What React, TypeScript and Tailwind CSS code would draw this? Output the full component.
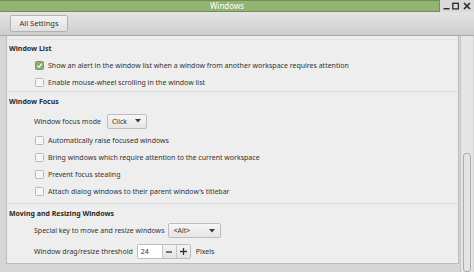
import React from "react";

function Check({ checked }: { checked?: boolean }) {
  return checked ? (
    <div className="w-[9px] h-[9px] rounded-[1.5px] bg-[#8cae69] border border-[#7a9c58] flex items-center justify-center shrink-0">
      <svg width="7" height="7" viewBox="0 0 7 7">
        <path d="M1.2 3.6 L2.9 5.2 L5.9 1.6" stroke="#ffffff" strokeWidth="1.2" fill="none" />
      </svg>
    </div>
  ) : (
    <div className="w-[9px] h-[9px] rounded-[1.5px] bg-[#f7f7f7] border border-[#b9b9b9] shrink-0" />
  );
}

function CheckRow({ label, checked, h }: { label: string; checked?: boolean; h: string }) {
  return (
    <div className={`flex items-center pl-[28px] gap-[4px] ${h}`}>
      <Check checked={checked} />
      <span>{label}</span>
    </div>
  );
}

function Combo({ text, w }: { text: string; w: string }) {
  return (
    <div className={`${w} h-[15px] rounded-[2px] border border-[#bdbdbd] bg-gradient-to-b from-[#f6f6f6] to-[#e6e6e6] flex items-center justify-between pl-[4px] pr-[5px]`}>
      <span>{text}</span>
      <svg width="6" height="4" viewBox="0 0 6 4">
        <path d="M0 0 H6 L3 3.5 Z" fill="#3a3a3a" />
      </svg>
    </div>
  );
}

function Header({ text, h }: { text: string; h: string }) {
  return <div className={`flex items-center pl-[2px] font-bold text-[#2a2a2a] ${h}`}>{text}</div>;
}

export default function App() {
  return (
    <div className="w-[474px] h-[272px] overflow-hidden bg-[#d6d6d6] flex flex-col font-['Noto_Sans',sans-serif] text-[7px] text-[#333333] leading-none">
      {/* Title bar */}
      <div className="h-[12px] flex shrink-0">
        <div className="w-[440px] bg-[#92b372] border-t border-b border-r border-[#6f8f54] flex items-center justify-center pl-[15px] text-white text-[8px]">
          Windows
        </div>
        <div className="flex-1 bg-[#dadada] flex items-center gap-[2px] pl-[3px] text-[#222]">
          <svg width="7" height="8" viewBox="0 0 7 8">
            <rect x="0.5" y="6" width="6" height="1.4" fill="#2a2a2a" />
          </svg>
          <svg width="7" height="8" viewBox="0 0 7 8">
            <rect x="0.8" y="1.3" width="5.6" height="5.6" fill="none" stroke="#2a2a2a" strokeWidth="1.3" />
          </svg>
          <svg width="8" height="8" viewBox="0 0 8 8" className="ml-[2px]">
            <path d="M1 1 L7 7 M7 1 L1 7" stroke="#2a2a2a" strokeWidth="1.7" />
          </svg>
        </div>
      </div>
      {/* Toolbar */}
      <div className="h-[24px] shrink-0 bg-gradient-to-b from-[#e4e4e4] to-[#cdcdcd] border-b border-[#aaaaaa] flex items-center pl-[10px]">
        <div className="w-[58px] h-[17px] rounded-[2px] border border-[#b3b3b3] bg-gradient-to-b from-[#f3f3f3] to-[#e0e0e0] flex items-center justify-center text-[#333] text-[7.5px]">
          All Settings
        </div>
      </div>
      {/* Main */}
      <div className="flex-1 flex">
        <div className="flex-1 flex flex-col pl-[6px]">
          <div className="h-[228px] bg-[#eeeeee] border-l border-r border-b border-[#bcbcbc] flex flex-col">
            <div className="h-[4px] border-b border-[#e2e2e2]" />
            <Header text="Window List" h="h-[17px]" />
            <CheckRow label="Show an alert in the window list when a window from another workspace requires attention" checked h="h-[17px]" />
            <CheckRow label="Enable mouse-wheel scrolling in the window list" h="h-[17px]" />
            <div className="h-[1px] bg-[#dcdcdc]" />
            <Header text="Window Focus" h="h-[19px]" />
            <div className="h-[20px] flex items-center pl-[27px] gap-[6px]">
              <span>Window focus mode</span>
              <Combo text="Click" w="w-[40px]" />
            </div>
            <CheckRow label="Automatically raise focused windows" h="h-[18px]" />
            <CheckRow label="Bring windows which require attention to the current workspace" h="h-[17px]" />
            <CheckRow label="Prevent focus stealing" h="h-[17px]" />
            <CheckRow label="Attach dialog windows to their parent window's titlebar" h="h-[17px]" />
            <div className="h-[3px]" />
            <div className="h-[1px] bg-[#dcdcdc]" />
            <Header text="Moving and Resizing Windows" h="h-[18px]" />
            <div className="h-[17px] flex items-center pl-[27px] gap-[4px]">
              <span>Special key to move and resize windows</span>
              <Combo text="<Alt>" w="w-[53px]" />
            </div>
            <div className="h-[4px]" />
            <div className="h-[17px] flex items-center pl-[27px] gap-[4px]">
              <span>Window drag/resize threshold</span>
              <div className="h-[15px] flex rounded-[2px] border border-[#bdbdbd] overflow-hidden">
                <div className="w-[24px] bg-white flex items-center pl-[3px]">24</div>
                <div className="w-[14px] border-l border-[#c6c6c6] bg-gradient-to-b from-[#f4f4f4] to-[#e4e4e4] flex items-center justify-center">
                  <svg width="6" height="6" viewBox="0 0 6 6"><rect x="0" y="2.4" width="6" height="1.3" fill="#333" /></svg>
                </div>
                <div className="w-[14px] border-l border-[#c6c6c6] bg-gradient-to-b from-[#f4f4f4] to-[#e4e4e4] flex items-center justify-center">
                  <svg width="7" height="7" viewBox="0 0 7 7"><path d="M0 3.5 H7 M3.5 0 V7" stroke="#333" strokeWidth="1.3" /></svg>
                </div>
              </div>
              <span className="ml-[1px]">Pixels</span>
            </div>
          </div>
        </div>
        {/* Scrollbar */}
        <div className="w-[13px] ml-[1px] mr-[1px] flex border-l border-[#c4c4c4] bg-[#e6e6e6]">
          <div className="flex-1 flex flex-col pl-[2px] pr-[2px]">
            <div className="h-[117px]" />
            <div className="flex-1 rounded-[3px] border border-[#ababab] bg-[#e4e4e4]" />
          </div>
        </div>
      </div>
    </div>
  );
}
